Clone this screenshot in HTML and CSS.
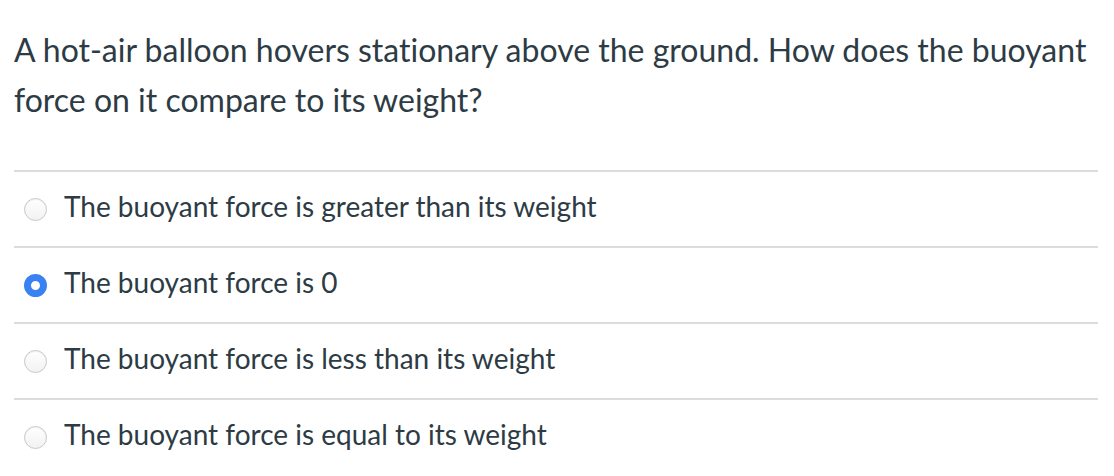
FILE: index.html
```html
<!DOCTYPE html>
<html lang="en">
<head>
<meta charset="utf-8">
<title>Quiz question</title>
<link rel="stylesheet" href="styles.css">
</head>
<body>
<div class="question">
  <p class="question-text">A hot-air balloon hovers stationary above the ground. How does the buoyant force on it compare to its weight?</p>
  <div class="answers">
    <label class="answer">
      <span class="radio"></span>
      <span class="answer-text">The buoyant force is greater than its weight</span>
    </label>
    <label class="answer">
      <span class="radio checked"></span>
      <span class="answer-text">The buoyant force is 0</span>
    </label>
    <label class="answer">
      <span class="radio"></span>
      <span class="answer-text">The buoyant force is less than its weight</span>
    </label>
    <label class="answer">
      <span class="radio"></span>
      <span class="answer-text">The buoyant force is equal to its weight</span>
    </label>
  </div>
</div>
</body>
</html>
```

FILE: styles.css
```css
html, body {
  margin: 0;
  padding: 0;
  background: #ffffff;
}

body {
  font-family: Lato, "Noto Sans", sans-serif;
  color: #2d3b45;
  font-variant-ligatures: none;
}

.question {
  padding: 0 16px 0 14px;
}

.question-text {
  margin: 0;
  padding-top: 25px;
  font-size: 32px;
  line-height: 50px;
  height: 145px;
}

.answers {
  display: flex;
  flex-direction: column;
}

.answer {
  display: flex;
  align-items: center;
  height: 74px;
  border-top: 2px solid #dcdcdc;
}

.radio {
  flex: none;
  width: 23px;
  height: 23px;
  box-sizing: border-box;
  margin: 0 17px 0 10px;
  border-radius: 50%;
  border: 1px solid #c8c8c8;
  background: linear-gradient(#ffffff, #f2f2f2);
  box-shadow: inset 0 1px 1px rgba(0, 0, 0, 0.06);
}

.radio.checked {
  border: 7px solid #3a82f2;
  background: #ffffff;
  box-shadow: none;
}

.answer-text {
  font-size: 28px;
  line-height: 36px;
  margin-bottom: 6px;
}
```
